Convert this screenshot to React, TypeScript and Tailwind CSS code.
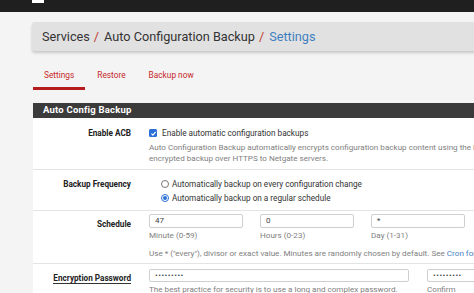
import React from "react";

const font = { fontFamily: "Roboto, 'Liberation Sans', sans-serif" };

function Label({ children, underline }: { children: React.ReactNode; underline?: boolean }) {
    return (
        <div className="w-[116px] shrink-0 pr-[18px] text-right text-[8.2px] leading-[10px] font-bold text-[#222]">
            <span className={underline ? "border-b border-[#333]" : ""}>{children}</span>
        </div>
    );
}

function Input({ value, className }: { value: string; className: string }) {
    return (
        <div className={`rounded-[2px] border border-[#cfcfcf] bg-white px-[5px] flex items-center text-[8px] text-[#444] ${className}`}>
            {value}
        </div>
    );
}

export default function App() {
    return (
        <div style={font} className="relative w-[474px] h-[293px] overflow-hidden bg-[#f4f4f4]">
            {/* top nav */}
            <div className="h-[12px] bg-[#1f1f1f] relative">
                <div className="absolute left-[32px] top-0 w-[12px] h-[3px] bg-white" />
            </div>

            <div className="w-[600px] pl-[33px]">
                {/* breadcrumb */}
                <div className="-ml-[1px] mt-[10px] h-[29px] rounded-l-[3px] bg-[#e1e1e1] shadow-[0_2px_3px_rgba(0,0,0,0.18)] flex items-center pl-[10px] text-[12.7px] text-[#333]">
                    <span>Services</span>
                    <span className="text-[#c0392b] ml-[4px] mr-[5px]">/</span>
                    <span>Auto Configuration Backup</span>
                    <span className="text-[#c0392b] ml-[4px] mr-[5px]">/</span>
                    <span className="text-[#3f7fbf]">Settings</span>
                </div>

                {/* tabs */}
                <div className="mt-[11px] flex text-[8.3px] leading-[12px] text-[#c62828]">
                    <div className="px-[11px] pt-[7px] pb-[6px] border-b-[3px] border-[#b71c1c]">Settings</div>
                    <div className="px-[12px] pt-[7px] pb-[6px] border-b-[3px] border-transparent">Restore</div>
                    <div className="px-[11px] pt-[7px] pb-[6px] border-b-[3px] border-transparent">Backup now</div>
                </div>

                {/* panel */}
                <div className="mt-[13px] bg-white">
                    <div className="h-[15px] bg-[#3b3b3b] flex items-center pl-[10px] text-[9.5px] font-bold tracking-[0.2px] text-white">
                        Auto Config Backup
                    </div>

                    {/* Enable ACB */}
                    <div className="flex h-[52px] pt-[10px] border-b border-[#e4e4e4]">
                        <Label>Enable ACB</Label>
                        <div className="text-[8.2px] text-[#333]">
                            <div className="flex items-center h-[10px]">
                                <div className="w-[8px] h-[8px] rounded-[1.5px] bg-[#2a6fd6] flex items-center justify-center mr-[5px]">
                                    <svg viewBox="0 0 10 10" className="w-[7px] h-[7px]">
                                        <path d="M2 5.2 L4.2 7.3 L8 2.8" fill="none" stroke="white" strokeWidth="1.6" />
                                    </svg>
                                </div>
                                <span>Enable automatic configuration backups</span>
                            </div>
                            <div className="mt-[4px] text-[8.1px] leading-[11px] text-[#808080] whitespace-nowrap">
                                <div>Auto Configuration Backup automatically encrypts configuration backup content using the Blowfish algorithm and sends the</div>
                                <div>encrypted backup over HTTPS to Netgate servers.</div>
                            </div>
                        </div>
                    </div>

                    {/* Backup Frequency */}
                    <div className="flex h-[41px] pt-[9px] border-b border-[#e4e4e4]">
                        <Label>Backup Frequency</Label>
                        <div className="pl-[12px] text-[8.2px] text-[#333] flex flex-col gap-[4px]">
                            <div className="flex items-center h-[10px]">
                                <div className="w-[8px] h-[8px] rounded-full border border-[#777] mr-[3px]" />
                                <span>Automatically backup on every configuration change</span>
                            </div>
                            <div className="flex items-center h-[10px]">
                                <div className="w-[8px] h-[8px] rounded-full border-[1.5px] border-[#2a6fd6] mr-[3px] flex items-center justify-center">
                                    <div className="w-[3.5px] h-[3.5px] rounded-full bg-[#2a6fd6]" />
                                </div>
                                <span>Automatically backup on a regular schedule</span>
                            </div>
                        </div>
                    </div>

                    {/* Schedule */}
                    <div className="flex h-[53px] pt-[3px] border-b border-[#e4e4e4]">
                        <div className="pt-[5px]">
                            <Label>Schedule</Label>
                        </div>
                        <div className="text-[8.1px] leading-[10px] text-[#808080]">
                            <div className="flex gap-[17px]">
                                <div className="w-[94px]">
                                    <Input value="47" className="w-[94px] h-[14px]" />
                                    <div className="mt-[2px]">Minute (0-59)</div>
                                </div>
                                <div className="w-[94px]">
                                    <Input value="0" className="w-[94px] h-[14px]" />
                                    <div className="mt-[2px]">Hours (0-23)</div>
                                </div>
                                <div className="w-[94px]">
                                    <Input value="*" className="w-[94px] h-[14px]" />
                                    <div className="mt-[2px]">Day (1-31)</div>
                                </div>
                            </div>
                            <div className="mt-[8px] whitespace-nowrap">
                                Use * ("every"), divisor or exact value. Minutes are randomly chosen by default. See{" "}
                                <span className="text-[#3f7fbf]">Cron format</span>
                            </div>
                        </div>
                    </div>

                    {/* Encryption Password */}
                    <div className="flex pt-[5px]">
                        <div className="pt-[4px]">
                            <Label underline>Encryption Password</Label>
                        </div>
                        <div className="flex gap-[18px] text-[8.1px] leading-[10px] text-[#808080]">
                            <div>
                                <Input value="•••••••••" className="w-[260px] h-[13px] tracking-[0.5px] text-[#333]" />
                                <div className="mt-[2px] whitespace-nowrap">The best practice for security is to use a long and complex password.</div>
                            </div>
                            <div>
                                <Input value="•••••••••" className="w-[95px] h-[13px] tracking-[0.5px] text-[#333]" />
                                <div className="mt-[2px]">Confirm</div>
                            </div>
                        </div>
                    </div>
                </div>
            </div>
        </div>
    );
}
